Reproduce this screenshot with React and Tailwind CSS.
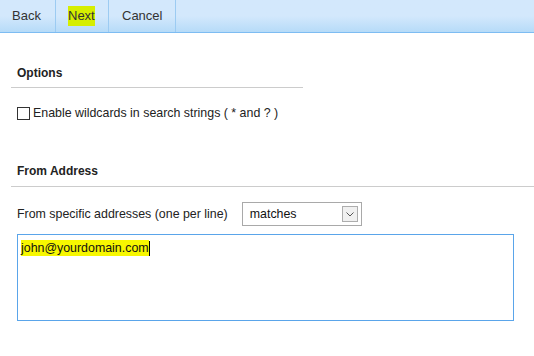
export default function App() {
  return (
    <div className="w-[534px] h-[356px] bg-white text-[12.4px] leading-[16px] text-[#222] overflow-hidden" style={{ fontFamily: '"Liberation Sans", Arial, sans-serif' }}>
      <div className="flex h-[33px] border-b border-[#7dbcf2] bg-gradient-to-b from-[#d3e8fc] from-50% to-[#b6dbf8] text-[13px]">
        <button className="w-[56px] h-full flex items-center pl-[12px] border-r border-[#9ccbf2] text-[#333]">Back</button>
        <button className="w-[53px] h-full flex items-center pl-[12px] border-r border-[#9ccbf2] text-[#333]">
          <span className="bg-[#d6ee00] py-[2px]">Next</span>
        </button>
        <button className="w-[67px] h-full flex items-center pl-[13px] border-r border-[#9ccbf2] text-[#333]">Cancel</button>
      </div>

      <div className="w-[292px] ml-[11px] mt-[32px] border-b border-[#cccccc] pb-[6px] pl-[6px]">
        <h2 className="text-[12px] font-bold text-[#222]">Options</h2>
      </div>
      <label className="flex items-center mt-[17px] ml-[17px] gap-[3px]">
        <span className="w-[13px] h-[13px] border border-[#333] bg-white"></span>
        <span>Enable wildcards in search strings ( * and ? )</span>
      </label>

      <div className="ml-[11px] mt-[42px] border-b border-[#cccccc] pb-[7px] pl-[6px]">
        <h2 className="text-[12px] font-bold text-[#222]">From Address</h2>
      </div>
      <div className="flex items-center mt-[15px] ml-[17px] gap-[14px]">
        <span>From specific addresses (one per line)</span>
        <div className="w-[120px] h-[24px] border border-[#a9a9a9] flex items-center justify-between pl-[7px] pr-[3px]">
          <span className="text-[#111]">matches</span>
          <span className="w-[16px] h-[16px] border border-[#adadad] bg-[#f0f0f0] flex items-center justify-center">
            <svg width="8" height="5" viewBox="0 0 8 5" fill="none">
              <path d="M0.5 0.5 L4 4 L7.5 0.5" stroke="#555" strokeWidth="1" />
            </svg>
          </span>
        </div>
      </div>
      <div className="ml-[17px] mt-[8px] w-[497px] h-[87px] border border-[#5aa5ea] px-[3px] pt-[5px]">
        <span className="bg-[#f7f700] py-[1px] text-[#111]">john@yourdomain.com</span>
        <span className="inline-block w-[1px] h-[15px] bg-black align-middle"></span>
      </div>
    </div>
  );
}
